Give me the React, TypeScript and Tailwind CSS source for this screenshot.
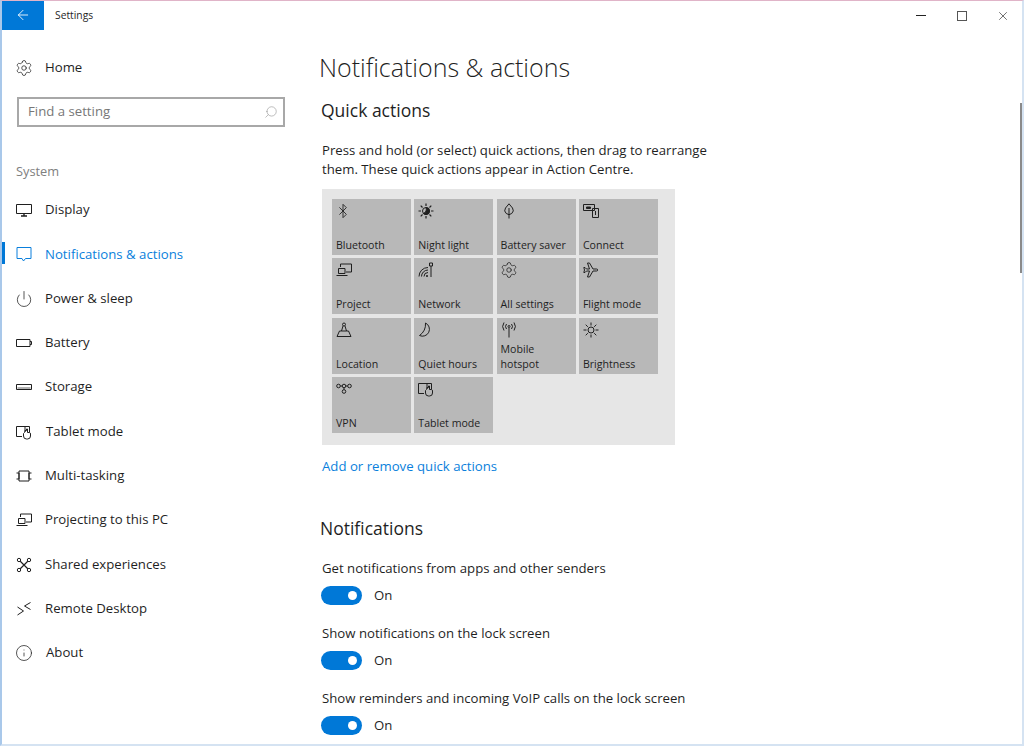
import { ArrowLeft, Bluetooth, Info, Power, Search, Settings, X } from "lucide-react";
import type { ReactNode } from "react";

const Svg = ({ children, className = "w-4 h-4" }: { children: ReactNode; className?: string }) => (
  <svg viewBox="0 0 16 16" fill="none" stroke="currentColor" strokeWidth="1" className={className}>
    {children}
  </svg>
);

const Gear = () => <Settings className="w-[18px] h-[18px] -m-px" strokeWidth={1} />;
const Display = () => (
  <Svg>
    <path d="M.5 2.500h15v9H.5z" />
    <path d="M5 14h6M8 11.500V14" strokeWidth="1.400" />
  </Svg>
);
const Note = () => <Svg><path d="M1 1.500h14v11H9.500L7.500 15l-1.500-2.500H1z" /></Svg>;
const Battery = () => <Svg><path d="M.5 4.500h13.500v7H.5zM14 6.500h1.500v3H14" /></Svg>;
const Storage = () => <Svg><path d="M.5 5.500h15v5H.5z" /><path d="M1.500 9h13" stroke="#999" strokeWidth="1.500" /></Svg>;
const TabletHand = ({ fill = "#fff" }: { fill?: string }) => (
  <Svg>
    <path d="M6 12.500H.5v-10h13v6" />
    <path d="M9 3v5M9 8v-1.500h1.500V5h1v3.500h2a1.500 1.500 0 0 1 1 1.500v2a3 3 0 0 1-3 3h-1a3 3 0 0 1-3-3v-2.500l1-1z" fill={fill} />
  </Svg>
);
const Tasks = () => <Svg><path d="M3 3h10v10H3zM.5 5h2.500v6H.5M15.500 5H13v6h2.500" /></Svg>;
const Project = () => <Svg><path d="M4.500 5V2h11v8H10M2.500 6.500h6.500v5H2.500zM.5 13.500h11" /></Svg>;
const Shared = () => (
  <Svg>
    <path d="M3 3l10 10M13 3L3 13" strokeWidth="1.200" />
    <circle cx="3" cy="3" r="1.700" fill="#fff" />
    <circle cx="13" cy="3" r="1.700" fill="#fff" />
    <circle cx="3" cy="13" r="1.700" fill="#fff" />
    <circle cx="13" cy="13" r="1.700" fill="#fff" />
  </Svg>
);
const Remote = () => <Svg><path d="M1.500 6l6 4-6 4M14.500 1.500l-6 3.500 6 3.500" /></Svg>;

const NightLight = () => (
  <Svg>
    <circle cx="8" cy="8" r="3.500" />
    <path d="M8 4.500a3.500 3.500 0 0 1 0 7 3.500 3.500 0 0 1-2.500-1 5 5 0 0 0 2.500-6z" fill="currentColor" />
    <path d="M8 .5v2.500M8 13v2.500M.5 8H3M13 8h2.500M2.700 2.700l1.800 1.800M11.500 11.500l1.800 1.800M13.300 2.700l-1.800 1.800M4.500 11.500l-1.800 1.800" strokeWidth="1.200" />
  </Svg>
);
const Leaf = () => <Svg><path d="M8 .8L11.500 5a4.200 4.200 0 1 1-7 0zM8 5v10.500" /></Svg>;
const Connect = () => (
  <Svg>
    <path d="M.5 1.500h11v6H.5z" />
    <path d="M3.500 4h4v1.500h-4z" fill="currentColor" />
    <path d="M9.500 5.500h6v9h-6zM12.500 8v4" />
  </Svg>
);
const Network = () => (
  <Svg>
    <path d="M1 14.500a9 9 0 0 1 9-9M3.500 14.500a6.500 6.500 0 0 1 6.500-6.500M6 14.500a4 4 0 0 1 4-4" />
    <path d="M11.500 1h3v3h-3zM13 4v11" />
    <circle cx="9" cy="14" r=".6" fill="currentColor" />
  </Svg>
);
const Plane = () => <Svg><path d="M.8 5.500H2L3.500 7h3L4.500 1h2L10 7h3.500a1.200 1 0 0 1 0 2H10l-3.500 6h-2l2-6h-3L2 10.500H.8L1.500 8z" /></Svg>;
const Location = () => <Svg><circle cx="8" cy="2.500" r="1.500" /><path d="M7 4l-1.500 5h5L9 4M5.500 9h-2l-2.500 5.500h14L12.500 9h-2" /></Svg>;
const QuietMoon = () => <Svg><path d="M7.500 1A6.400 6.400 0 0 1 1.500 13.500 14 14 0 0 0 7.500 1z" /></Svg>;
const Hotspot = () => (
  <Svg>
    <path d="M8 6v9.500" />
    <circle cx="8" cy="4.500" r="1" />
    <path d="M5.500 2a4 4 0 0 0 0 5M10.500 2a4 4 0 0 1 0 5M3 .5a7 7 0 0 0 0 8M13 .5a7 7 0 0 1 0 8" />
  </Svg>
);
const Brightness = () => (
  <Svg>
    <circle cx="8" cy="8" r="3" />
    <path d="M8 .5v3M8 12.500v3M.5 8h3M12.500 8h3M2.700 2.700l2.100 2.100M11.200 11.200l2.100 2.100M13.300 2.700l-2.100 2.100M4.800 11.200l-2.100 2.100" />
  </Svg>
);
const Vpn = () => (
  <Svg>
    <circle cx="2.500" cy="5" r="1.800" />
    <circle cx="13.500" cy="5" r="1.800" />
    <circle cx="8" cy="5" r="1.800" />
    <circle cx="8" cy="10.500" r="1.800" />
    <path d="M4.300 5h1.900M9.800 5h1.900M8 6.800v1.900" />
  </Svg>
);

const navItems: { label: string; icon: ReactNode; active?: boolean; textClass?: string }[] = [
  { label: "Display", icon: <Display /> },
  { label: "Notifications & actions", icon: <Note />, active: true },
  { label: "Power & sleep", icon: <Power className="w-[18px] h-[18px] -m-px" strokeWidth={1} /> },
  { label: "Battery", icon: <Battery /> },
  { label: "Storage", icon: <Storage /> },
  { label: "Tablet mode", icon: <TabletHand />, textClass: "ml-[14px]" },
  { label: "Multi-tasking", icon: <Tasks /> },
  { label: "Projecting to this PC", icon: <Project /> },
  { label: "Shared experiences", icon: <Shared /> },
  { label: "Remote Desktop", icon: <Remote /> },
  { label: "About", icon: <Info className="w-[18px] h-[18px] -m-px" strokeWidth={1} />, textClass: "ml-[14px]" },
];

const tiles: { label: string; icon: ReactNode }[] = [
  { label: "Bluetooth", icon: <Bluetooth className="w-4 h-4 -ml-px" strokeWidth={1.3} /> },
  { label: "Night light", icon: <NightLight /> },
  { label: "Battery saver", icon: <Leaf /> },
  { label: "Connect", icon: <Connect /> },
  { label: "Project", icon: <Project /> },
  { label: "Network", icon: <Network /> },
  { label: "All settings", icon: <Settings className="w-[18px] h-[18px] -m-px" strokeWidth={1} /> },
  { label: "Flight mode", icon: <Plane /> },
  { label: "Location", icon: <Location /> },
  { label: "Quiet hours", icon: <QuietMoon /> },
  { label: "Mobile hotspot", icon: <Hotspot /> },
  { label: "Brightness", icon: <Brightness /> },
  { label: "VPN", icon: <Vpn /> },
  { label: "Tablet mode", icon: <TabletHand fill="#b8b8b8" /> },
];

const toggles = [
  "Get notifications from apps and other senders",
  "Show notifications on the lock screen",
  "Show reminders and incoming VoIP calls on the lock screen",
];

export default function App() {
  return (
    <div className="relative flex flex-col w-[1024px] h-[746px] overflow-hidden bg-white text-[#1f1f1f] font-['Open_Sans',sans-serif] border-t border-t-[#e0b4c8] border-l-2 border-l-[#a9c8ea] border-r-2 border-r-[#d5e3f2] border-b-2 border-b-[#d5e3f2]">
      <div className="flex items-center h-[29px] shrink-0">
        <div className="flex items-center justify-center w-[42px] h-[29px] pb-px bg-[#0078d7] text-white">
          <ArrowLeft className="w-4 h-4" strokeWidth={1.3} />
        </div>
        <span className="ml-[11px] text-[10.300px]">Settings</span>
        <div className="ml-auto flex items-center text-[#333]">
          <div className="flex justify-center w-[41px]"><div className="w-[10px] h-px bg-[#222]" /></div>
          <div className="flex justify-center w-[41px]"><div className="w-[10px] h-[10px] border border-[#555]" /></div>
          <div className="flex justify-center w-[41px] mr-[-1px]"><X className="w-[14px] h-[14px]" strokeWidth={1.2} /></div>
        </div>
      </div>

      <div className="flex flex-1 min-h-0">
        <aside className="w-[317px] shrink-0">
          <div className="flex items-center h-[20px] mt-[28px] pl-[14px] text-[13.200px]">
            <Gear />
            <span className="ml-[13px]">Home</span>
          </div>
          <div className="flex items-center justify-between ml-[15px] mt-[19px] w-[268px] h-[30px] pl-[9px] pr-[5px] border-2 border-[#a8a8a8] text-[13.200px] text-[#777]">
            <span>Find a setting</span>
            <Search className="w-[14px] h-[14px] -scale-x-100 text-[#999]" strokeWidth={1.1} />
          </div>
          <div className="mt-[34px] ml-[14px] h-[20px] leading-[20px] text-[12.800px] text-[#808080]">System</div>
          <nav className="mt-[7px]">
            {navItems.map((item) => (
              <div key={item.label} className={`relative flex items-center h-[44.300px] pl-[14px] text-[13.200px] ${item.active ? "text-[#0a7fdc]" : ""}`}>
                {item.active && <div className="absolute left-0 top-[10px] w-[3px] h-[22px] bg-[#0078d7]" />}
                {item.icon}
                <span className={item.textClass ?? "ml-[13px]"}>{item.label}</span>
              </div>
            ))}
          </nav>
        </aside>

        <main className="flex-1 min-w-0">
          <h1 className="mt-[19px] h-[36px] leading-[36px] text-[25px] font-light">Notifications &amp; actions</h1>
          <h2 className="mt-[12px] ml-[2px] h-[26px] leading-[26px] text-[17.500px]">Quick actions</h2>
          <p className="mt-[18px] ml-[3px] w-[400px] text-[13.200px] leading-[19px]">
            Press and hold (or select) quick actions, then drag to rearrange them. These quick actions appear in Action Centre.
          </p>
          <div className="mt-[10px] ml-[3px] w-[353px] h-[256px] p-[10px] bg-[#e6e6e6]">
            <div className="grid grid-cols-[repeat(4,79px)] auto-rows-[56px] gap-x-[3.300px] gap-y-[3.300px]">
              {tiles.map((tile, i) => (
                <div key={i} className="flex flex-col justify-between h-[56px] pl-[4px] pr-[2px] pt-[4px] pb-[2px] bg-[#b8b8b8] text-[10.600px] leading-[15px]">
                  <div className="h-4">{tile.icon}</div>
                  <div>{tile.label}</div>
                </div>
              ))}
            </div>
          </div>
          <div className="mt-[12px] ml-[3px] h-[19px] leading-[19px] text-[13.200px] text-[#0a7fdc]">Add or remove quick actions</div>
          <h2 className="mt-[39px] ml-px h-[26px] leading-[26px] text-[17.500px]">Notifications</h2>
          <div className="mt-[18px] ml-[2px] flex flex-col gap-[19px]">
            {toggles.map((label) => (
              <div key={label}>
                <div className="ml-px h-[19px] leading-[19px] text-[13.200px]">{label}</div>
                <div className="mt-[8px] flex items-center h-[19px]">
                  <div className="flex items-center justify-end w-[41px] h-[19px] pr-[5px] rounded-full bg-[#0078d7]">
                    <div className="w-[9px] h-[9px] rounded-full bg-white" />
                  </div>
                  <span className="ml-[12px] text-[13.200px]">On</span>
                </div>
              </div>
            ))}
          </div>
        </main>
      </div>

      <div className="absolute right-0 top-[102px] w-[2px] h-[170px] bg-[#8a8a8a]" />
    </div>
  );
}
